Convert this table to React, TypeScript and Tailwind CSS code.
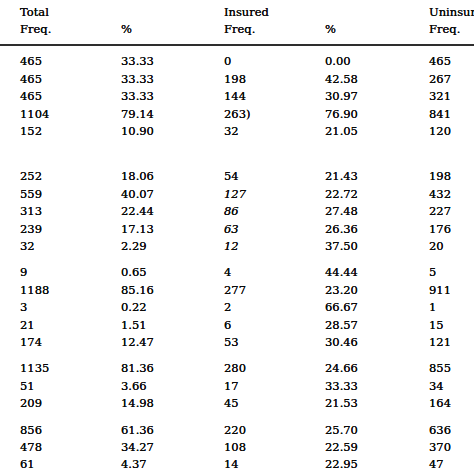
import React from "react";

type Cell = string | { v: string; i: true };
const groups: Cell[][][] = [
  [
    ["465", "33.33", "0", "0.00", "465"],
    ["465", "33.33", "198", "42.58", "267"],
    ["465", "33.33", "144", "30.97", "321"],
    ["1104", "79.14", "263)", "76.90", "841"],
    ["152", "10.90", "32", "21.05", "120"],
  ],
  [
    ["252", "18.06", "54", "21.43", "198"],
    ["559", "40.07", { v: "127", i: true }, "22.72", "432"],
    ["313", "22.44", { v: "86", i: true }, "27.48", "227"],
    ["239", "17.13", { v: "63", i: true }, "26.36", "176"],
    ["32", "2.29", { v: "12", i: true }, "37.50", "20"],
  ],
  [
    ["9", "0.65", "4", "44.44", "5"],
    ["1188", "85.16", "277", "23.20", "911"],
    ["3", "0.22", "2", "66.67", "1"],
    ["21", "1.51", "6", "28.57", "15"],
    ["174", "12.47", "53", "30.46", "121"],
  ],
  [
    ["1135", "81.36", "280", "24.66", "855"],
    ["51", "3.66", "17", "33.33", "34"],
    ["209", "14.98", "45", "21.53", "164"],
  ],
  [
    ["856", "61.36", "220", "25.70", "636"],
    ["478", "34.27", "108", "22.59", "370"],
    ["61", "4.37", "14", "22.95", "47"],
  ],
];

const gridCls = "grid grid-cols-[101px_103px_101px_104px_1fr] pl-[20px] leading-[17.4px] whitespace-nowrap";

function Row({ cells }: { cells: Cell[] }) {
  return (
    <div className={gridCls}>
      {cells.map((c, k) =>
        typeof c === "string" ? (
          <span key={k}>{c}</span>
        ) : (
          <span key={k} className="italic">
            {c.v}
          </span>
        )
      )}
    </div>
  );
}

export default function App() {
  return (
    <div
      className="w-[474px] h-[474px] overflow-hidden bg-white text-[#0a0a0a] text-[11.5px] pt-[3.5px] [text-shadow:0_0_0.5px_#000]"
      style={{ fontFamily: '"DejaVu Serif", serif' }}
    >
      <div className={gridCls}>
        <span>Total</span>
        <span></span>
        <span>Insured</span>
        <span></span>
        <span className="overflow-hidden">Uninsured</span>
        <span>Freq.</span>
        <span>%</span>
        <span>Freq.</span>
        <span>%</span>
        <span>Freq.</span>
      </div>
      <div className="mt-[6px] h-[2px] bg-[#2e2e2e]" />
      <div className="mt-[7px] flex flex-col">
        {groups.map((g, gi) => (
          <div
            key={gi}
            className={gi === 0 ? "" : gi === 1 ? "mt-[28px]" : "mt-[9px]"}
          >
            {g.map((r, ri) => (
              <Row key={ri} cells={r} />
            ))}
          </div>
        ))}
      </div>
    </div>
  );
}
